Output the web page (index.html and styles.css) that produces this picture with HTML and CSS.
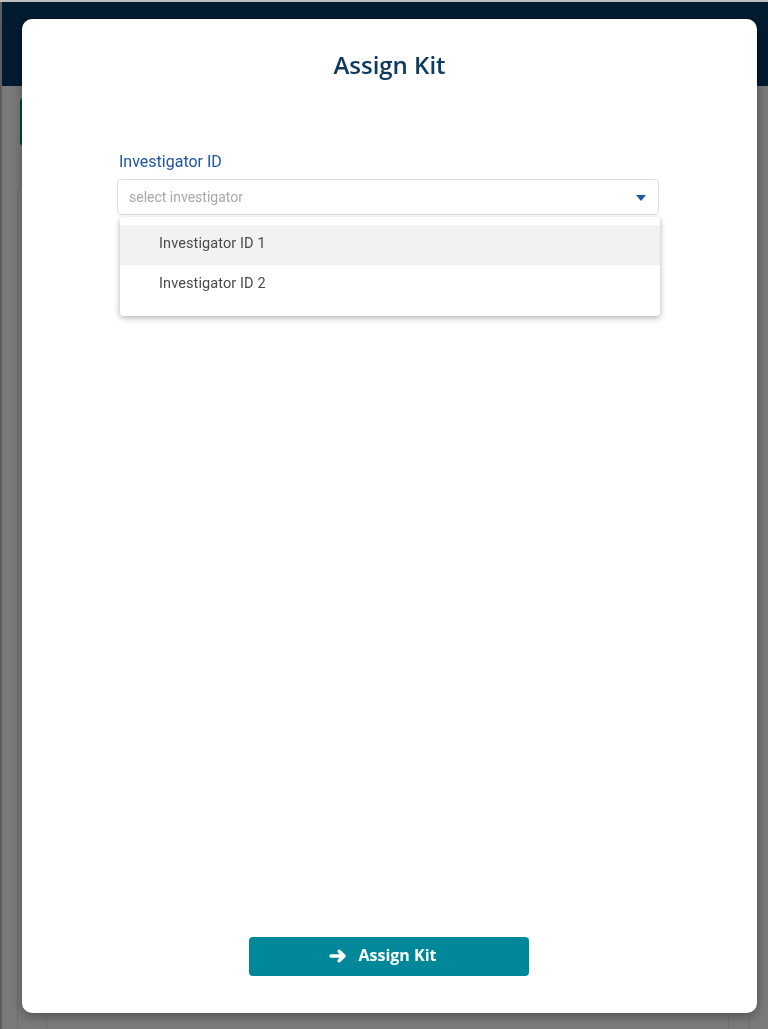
FILE: index.html
```html
<!DOCTYPE html>
<html lang="en">
<head>
  <meta charset="UTF-8" />
  <meta name="viewport" content="width=device-width, initial-scale=1" />
  <title>Kits - Assign Kit</title>
  <link rel="stylesheet" href="styles.css">
</head>
<body>
  <div class="page">
    <nav class="topbar"></nav>
    <main class="content">
      <button class="page-btn">Add Kit</button>
      <div class="panel">
        <div class="panel-table"></div>
      </div>
    </main>
  </div>

  <!-- Assign kit modal -->
  <div class="overlay">
    <div class="modal">
      <h2 class="modal-title">Assign Kit</h2>

      <div class="field">
        <label class="field-label">Investigator ID</label>
        <div class="select">
          <div class="select-box">
            <span class="placeholder">select investigator</span>
            <span class="caret"></span>
          </div>
          <ul class="select-menu">
            <li class="option active">Investigator ID 1</li>
            <li class="option">Investigator ID 2</li>
          </ul>
        </div>
      </div>

      <div class="modal-footer">
        <button class="btn-assign">
          <svg class="btn-icon" width="19" height="14" viewBox="0 0 19 14">
            <path d="M2 7h13 M10.2 2.2l4.8 4.8-4.8 4.8" fill="none" stroke="#fff" stroke-width="3.4" stroke-linecap="round" stroke-linejoin="round"/>
          </svg>
          Assign Kit
        </button>
      </div>
    </div>
  </div>
</body>
</html>
```

FILE: styles.css
```css
html {
  background: #bdbdbd;
}
body {
  margin: 0;
  padding: 0;
  font-family: Roboto, "Open Sans", Arial, sans-serif;
  color: #333;
}

/* page behind the modal */
.page {
  margin: 2px 0 0 2px;
  height: 1027px;
  overflow: hidden;
  background: #f4f4f4;
}
.topbar {
  height: 84px;
  background: #033660;
}
.content {
  padding: 12px 18px 0 15px;
}
.page-btn {
  display: block;
  height: 48px;
  width: 160px;
  margin: 0 0 38px 3px;
  border: none;
  border-radius: 4px;
  background: #00889a;
  color: #fff;
}
.panel {
  height: 900px;
  background: #f4f4f4;
  border: 1px solid #ddd;
  border-radius: 8px;
  padding: 0 20px 0 28px;
}
.panel-table {
  height: 100%;
  border-left: 1px solid #e2e2e2;
  border-right: 1px solid #e2e2e2;
}

/* overlay + modal */
.overlay {
  position: fixed;
  top: 2px;
  left: 0;
  right: 0;
  bottom: 0;
  background: rgba(0, 0, 0, 0.5);
  display: flex;
  padding: 17px 11px 16px 22px;
}
.modal {
  flex: 1;
  display: flex;
  flex-direction: column;
  background: #fff;
  border-radius: 10px;
  box-shadow: 0 3px 12px rgba(0, 0, 0, 0.35);
  padding: 29px 0 37px;
}
.modal-title {
  margin: 0;
  text-align: center;
  font-family: "Open Sans", Arial, sans-serif;
  font-weight: 600;
  font-size: 24px;
  line-height: 33px;
  color: #0c3a60;
}

.field {
  width: 542px;
  margin: 71px 0 0 95px;
}
.field-label {
  display: block;
  padding-left: 2px;
  font-size: 16px;
  line-height: 20px;
  color: #1f56a3;
  margin-bottom: 7px;
}
.select {
  position: relative;
}
.select-box {
  display: flex;
  align-items: center;
  justify-content: space-between;
  height: 34px;
  border: 1px solid #e0e0e0;
  border-radius: 4px;
  padding: 0 12px 0 11px;
}
.placeholder {
  font-size: 14px;
  color: #a8a8a8;
}
.caret {
  width: 0;
  height: 0;
  border-left: 5px solid transparent;
  border-right: 5px solid transparent;
  border-top: 6px solid #1f56a3;
  margin-top: 1px;
}
.select-menu {
  position: absolute;
  top: 38px;
  left: 3px;
  right: -1px;
  margin: 0;
  padding: 8px 0 11px;
  list-style: none;
  background: #fff;
  border-radius: 4px;
  box-shadow: 0 2px 6px rgba(0, 0, 0, 0.3);
}
.option {
  height: 40px;
  line-height: 38px;
  padding-left: 39px;
  font-size: 14.5px;
  letter-spacing: 0.1px;
  color: #4a4a4a;
}
.option.active {
  background: #f2f2f2;
}

.modal-footer {
  margin-top: auto;
  display: flex;
  justify-content: center;
}
.btn-assign {
  display: flex;
  align-items: center;
  justify-content: center;
  gap: 11px;
  width: 280px;
  height: 39px;
  margin-left: -2px;
  padding: 0 0 3px 0;
  border: none;
  border-radius: 4px;
  background: #00889a;
  color: #fff;
  font-family: "Open Sans", Arial, sans-serif;
  font-weight: 700;
  font-size: 16px;
  cursor: pointer;
}
.btn-icon {
  margin-left: -12px;
  margin-top: 2px;
}
```
